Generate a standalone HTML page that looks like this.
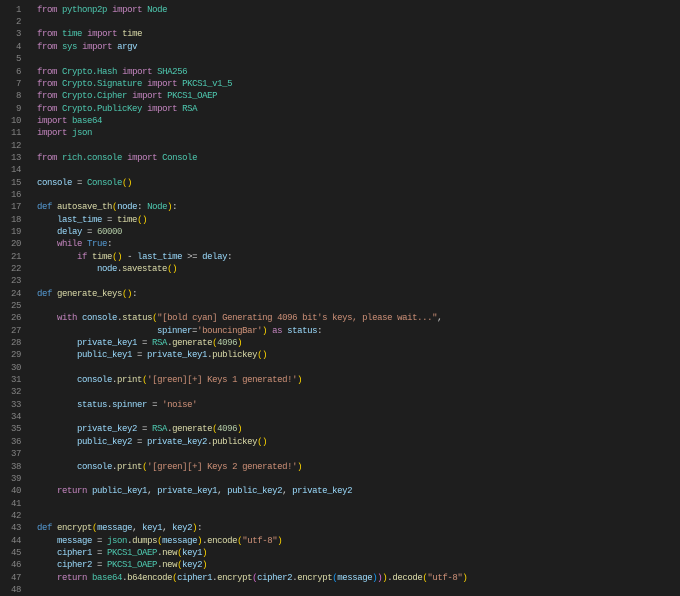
<!DOCTYPE html><html><head><style>
body{margin:0;background:#1e1e1e;width:680px;height:590px;overflow:hidden;}
pre{margin:0;font-family:"Liberation Mono",monospace;font-size:9px;letter-spacing:-0.4px;line-height:12.35px;white-space:pre;position:absolute;top:3.8px;}
.g{left:0;width:21px;text-align:right;color:#858585;}
.c{left:37px;color:#d4d4d4;}
.k{color:#c586c0}.m{color:#4ec9b0}.v{color:#9cdcfe}.f{color:#dcdcaa}.s{color:#ce9178}.n{color:#b5cea8}.b{color:#569cd6}.y{color:#ffd700}.p{color:#da70d6}.q{color:#179fff}
</style></head><body>
<pre class="g">
1
2
3
4
5
6
7
8
9
10
11
12
13
14
15
16
17
18
19
20
21
22
23
24
25
26
27
28
29
30
31
32
33
34
35
36
37
38
39
40
41
42
43
44
45
46
47
48</pre>
<pre class="c">
<span class="k">from</span> <span class="m">pythonp2p</span> <span class="k">import</span> <span class="m">Node</span>

<span class="k">from</span> <span class="m">time</span> <span class="k">import</span> <span class="f">time</span>
<span class="k">from</span> <span class="m">sys</span> <span class="k">import</span> <span class="v">argv</span>

<span class="k">from</span> <span class="m">Crypto.Hash</span> <span class="k">import</span> <span class="m">SHA256</span>
<span class="k">from</span> <span class="m">Crypto.Signature</span> <span class="k">import</span> <span class="m">PKCS1_v1_5</span>
<span class="k">from</span> <span class="m">Crypto.Cipher</span> <span class="k">import</span> <span class="m">PKCS1_OAEP</span>
<span class="k">from</span> <span class="m">Crypto.PublicKey</span> <span class="k">import</span> <span class="m">RSA</span>
<span class="k">import</span> <span class="m">base64</span>
<span class="k">import</span> <span class="m">json</span>

<span class="k">from</span> <span class="m">rich.console</span> <span class="k">import</span> <span class="m">Console</span>

<span class="v">console</span> = <span class="m">Console</span><span class="y">()</span>

<span class="b">def</span> <span class="f">autosave_th</span><span class="y">(</span><span class="v">node</span>: <span class="m">Node</span><span class="y">)</span>:
    <span class="v">last_time</span> = <span class="f">time</span><span class="y">()</span>
    <span class="v">delay</span> = <span class="n">60000</span>
    <span class="k">while</span> <span class="b">True</span>:
        <span class="k">if</span> <span class="f">time</span><span class="y">()</span> - <span class="v">last_time</span> &gt;= <span class="v">delay</span>:
            <span class="v">node</span>.<span class="f">savestate</span><span class="y">()</span>

<span class="b">def</span> <span class="f">generate_keys</span><span class="y">()</span>:

    <span class="k">with</span> <span class="v">console</span>.<span class="f">status</span><span class="y">(</span><span class="s">"[bold cyan] Generating 4096 bit's keys, please wait..."</span>,
                        <span class="v">spinner</span>=<span class="s">'bouncingBar'</span><span class="y">)</span> <span class="k">as</span> <span class="v">status</span>:
        <span class="v">private_key1</span> = <span class="m">RSA</span>.<span class="f">generate</span><span class="y">(</span><span class="n">4096</span><span class="y">)</span>
        <span class="v">public_key1</span> = <span class="v">private_key1</span>.<span class="f">publickey</span><span class="y">()</span>

        <span class="v">console</span>.<span class="f">print</span><span class="y">(</span><span class="s">'[green][+] Keys 1 generated!'</span><span class="y">)</span>

        <span class="v">status</span>.<span class="v">spinner</span> = <span class="s">'noise'</span>

        <span class="v">private_key2</span> = <span class="m">RSA</span>.<span class="f">generate</span><span class="y">(</span><span class="n">4096</span><span class="y">)</span>
        <span class="v">public_key2</span> = <span class="v">private_key2</span>.<span class="f">publickey</span><span class="y">()</span>

        <span class="v">console</span>.<span class="f">print</span><span class="y">(</span><span class="s">'[green][+] Keys 2 generated!'</span><span class="y">)</span>

    <span class="k">return</span> <span class="v">public_key1</span>, <span class="v">private_key1</span>, <span class="v">public_key2</span>, <span class="v">private_key2</span>


<span class="b">def</span> <span class="f">encrypt</span><span class="y">(</span><span class="v">message</span>, <span class="v">key1</span>, <span class="v">key2</span><span class="y">)</span>:
    <span class="v">message</span> = <span class="m">json</span>.<span class="f">dumps</span><span class="y">(</span><span class="v">message</span><span class="y">)</span>.<span class="f">encode</span><span class="y">(</span><span class="s">"utf-8"</span><span class="y">)</span>
    <span class="v">cipher1</span> = <span class="m">PKCS1_OAEP</span>.<span class="f">new</span><span class="y">(</span><span class="v">key1</span><span class="y">)</span>
    <span class="v">cipher2</span> = <span class="m">PKCS1_OAEP</span>.<span class="f">new</span><span class="y">(</span><span class="v">key2</span><span class="y">)</span>
    <span class="k">return</span> <span class="m">base64</span>.<span class="f">b64encode</span><span class="y">(</span><span class="v">cipher1</span>.<span class="f">encrypt</span><span class="p">(</span><span class="v">cipher2</span>.<span class="f">encrypt</span><span class="q">(</span><span class="v">message</span><span class="q">)</span><span class="p">)</span><span class="y">)</span>.<span class="f">decode</span><span class="y">(</span><span class="s">"utf-8"</span><span class="y">)</span>
</pre>
</body></html>
